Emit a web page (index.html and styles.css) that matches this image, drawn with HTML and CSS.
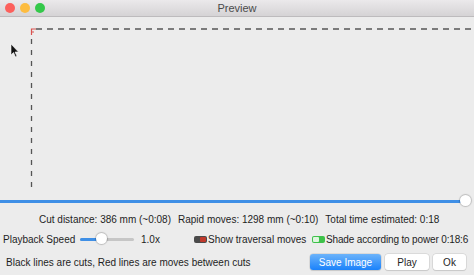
FILE: index.html
```html
<!DOCTYPE html>
<html lang="en">
<head>
    <meta charset="UTF-8">
    <title>Preview</title>
    <link rel="stylesheet" href="styles.css">
</head>
<body>
    <div class="window">
        <div class="titlebar">
            <div class="lights">
                <span class="light red"></span>
                <span class="light yellow"></span>
                <span class="light green"></span>
            </div>
            <div class="title">Preview</div>
        </div>

        <!-- preview canvas -->
        <div class="canvas">
            <svg width="474" height="180" viewBox="0 0 474 180">
                <line x1="36" y1="12" x2="471" y2="12" stroke="#555" stroke-width="1.3" stroke-dasharray="6 5"/>
                <line x1="31.5" y1="22" x2="31.5" y2="176" stroke="#555" stroke-width="1.3" stroke-dasharray="5 6"/>
                <path d="M31.5 18 V12 H36 M31.5 15 H34" stroke="#d9534f" stroke-width="1.2" fill="none"/>
                <path d="M11 27 L11 38 L13.5 35.5 L15.5 40 L17 39.3 L15 35 L18.5 35 Z" fill="#111" stroke="#fff" stroke-width="0.6"/>
            </svg>
        </div>

        <div class="timeline">
            <div class="track"></div>
            <div class="thumb end"></div>
        </div>

        <div class="stats">
            <span>Cut distance: 386 mm (~0:08)</span>
            <span>Rapid moves: 1298 mm (~0:10)</span>
            <span>Total time estimated: 0:18</span>
        </div>

        <div class="controls">
            <span class="label">Playback Speed</span>
            <div class="speed">
                <div class="speed-track"><div class="speed-fill"></div></div>
                <div class="thumb speed-thumb"></div>
            </div>
            <span class="speed-value">1.0x</span>
            <span class="toggle off"><span class="knob"></span></span>
            <span class="toggle-label traversal">Show traversal moves</span>
            <span class="toggle on"><span class="knob"></span></span>
            <span class="toggle-label shade">Shade according to power 0:18:6</span>
        </div>

        <div class="footer">
            <span class="legend">Black lines are cuts, Red lines are moves between cuts</span>
            <button class="btn primary">Save Image</button>
            <button class="btn">Play</button>
            <button class="btn">Ok</button>
        </div>
    </div>
</body>
</html>
```

FILE: styles.css
```css
body {
    margin: 0;
    background-color: #ececec;
    font-family: "Liberation Sans", Arial, sans-serif;
    font-size: 10px;
    color: #1e1e1e;
}

.window {
    width: 474px;
    height: 275px;
    display: flex;
    flex-direction: column;
    overflow: hidden;
    white-space: nowrap;
}

.titlebar {
    height: 16px;
    position: relative;
    background: linear-gradient(#ebe9eb, #d5d3d5);
    border-bottom: 1px solid #bdbbbd;
    display: flex;
    align-items: center;
    justify-content: center;
}

.lights {
    position: absolute;
    left: 5px;
    top: 3px;
    display: flex;
    gap: 5px;
}

.light {
    width: 10px;
    height: 10px;
    border-radius: 50%;
}

.light.red { background: #fc605c; }
.light.yellow { background: #fdbc40; }
.light.green { background: #34c84a; }

.title {
    font-size: 11px;
    color: #4a4a4a;
}

.canvas {
    height: 178px;
}

.canvas svg {
    display: block;
}

.timeline {
    height: 12px;
    position: relative;
    display: flex;
    align-items: center;
}

.track {
    width: 467px;
    height: 3px;
    background: #3f8fe6;
}

.thumb {
    width: 11px;
    height: 11px;
    border-radius: 50%;
    background: #fff;
    box-shadow: 0 0 1px 1px rgba(0, 0, 0, 0.2);
}

.thumb.end {
    position: absolute;
    left: 460px;
    top: 0;
}

.stats {
    display: flex;
    gap: 7px;
    padding-left: 39px;
    margin-top: 5px;
    height: 14px;
    align-items: center;
}

.controls {
    display: flex;
    align-items: center;
    height: 14px;
    margin-top: 6px;
    padding-left: 3px;
}

.controls > * {
    flex-shrink: 0;
}

.label {
    width: 68px;
}

.speed {
    width: 54px;
    height: 12px;
    margin-left: 9px;
    position: relative;
    display: flex;
    align-items: center;
}

.speed-track {
    width: 54px;
    height: 3px;
    background: #c6c6c6;
    border-radius: 2px;
}

.speed-fill {
    width: 21px;
    height: 3px;
    background: #3f8fe6;
    border-radius: 2px;
}

.speed-thumb {
    position: absolute;
    left: 16px;
    top: 0;
}

.speed-value {
    margin-left: 7px;
    width: 53px;
}

.toggle {
    width: 13px;
    height: 7px;
    border-radius: 2px;
    display: flex;
    align-items: center;
    box-sizing: border-box;
    padding: 1px;
}

.toggle.off {
    background: #4a4a4a;
    justify-content: flex-end;
}

.toggle.off .knob {
    background: #c0392b;
}

.toggle.on {
    background: #3ec24a;
    justify-content: flex-start;
}

.toggle.on .knob {
    background: #dff5df;
}

.knob {
    width: 6px;
    height: 5px;
    border-radius: 1px;
}

.toggle-label {
    margin-left: 1px;
}

.toggle-label.traversal {
    width: 104px;
}

.toggle-label.shade {
    letter-spacing: -0.15px;
}

.footer {
    display: flex;
    align-items: center;
    margin-top: 8px;
    padding-left: 6px;
}

.legend {
    flex: 1;
}

.btn {
    font-family: "Liberation Sans", Arial, sans-serif;
    font-size: 10px;
    height: 16px;
    padding: 0;
    margin-left: 4px;
    background: #fff;
    color: #1e1e1e;
    border: none;
    border-radius: 3px;
    box-shadow: 0 0 0 0.5px #c8c8c8, 0 1px 1px rgba(0, 0, 0, 0.15);
    width: 44px;
}

.btn.primary {
    width: 71px;
    background: linear-gradient(#6cb3fa, #1a82fb);
    color: #fff;
}

.btn:last-child {
    width: 33px;
    margin-right: 8px;
}
```
